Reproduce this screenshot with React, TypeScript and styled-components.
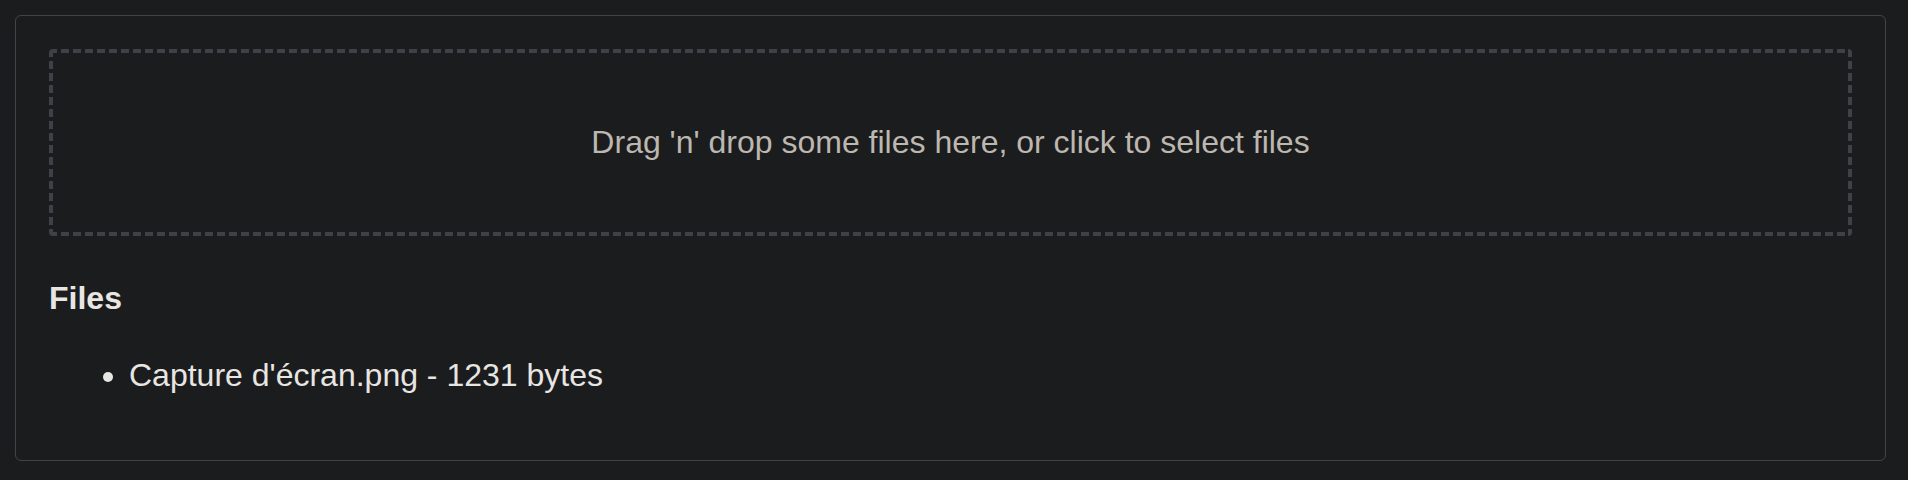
import React from "react";
import styled, { createGlobalStyle } from "styled-components";

const GlobalStyle = createGlobalStyle`
  html, body {
    margin: 0;
    padding: 0;
    background: #1b1c1e;
  }
  body {
    font-family: "Liberation Sans", Arial, sans-serif;
    color: #e8e6e3;
  }
`;

const Page = styled.div`
  padding: 15px 0 19px 15px;
`;

const Card = styled.section`
  box-sizing: border-box;
  width: 1871px;
  border: 1px solid #424447;
  border-radius: 6px;
  padding: 33px;
  display: flex;
  flex-direction: column;
`;

const dash = "#3e4246";

const DropZone = styled.div`
  box-sizing: border-box;
  height: 187px;
  display: flex;
  align-items: center;
  justify-content: center;
  border-radius: 4px;
  cursor: pointer;
  background:
    repeating-linear-gradient(90deg, ${dash} 0 8px, transparent 8px 12px) top left / 100% 4px no-repeat,
    repeating-linear-gradient(90deg, ${dash} 0 8px, transparent 8px 12px) bottom left / 100% 4px no-repeat,
    repeating-linear-gradient(180deg, ${dash} 0 8px, transparent 8px 12px) top left / 4px 100% no-repeat,
    repeating-linear-gradient(180deg, ${dash} 0 8px, transparent 8px 12px) top right / 4px 100% no-repeat;
`;

const DropText = styled.p`
  margin: 0;
  font-size: 32px;
  line-height: 37px;
  color: #bcb7af;
`;

const Heading = styled.h4`
  margin: 44px 0 40px;
  font-size: 32px;
  line-height: 37px;
  font-weight: 700;
  color: #e8e6e3;
`;

const FileList = styled.ul`
  margin: 0 0 33px;
  padding-left: 80px;
  font-size: 32px;
  line-height: 37px;
  color: #e8e6e3;
`;

const FileItem = styled.li``;

const files = [{ name: "Capture d'écran.png", size: 1231 }];

export default function App() {
  return (
    <>
      <GlobalStyle />
      <Page>
        <Card>
          <DropZone>
            <DropText>Drag 'n' drop some files here, or click to select files</DropText>
          </DropZone>
          <Heading>Files</Heading>
          <FileList>
            {files.map((f) => (
              <FileItem key={f.name}>
                {f.name} - {f.size} bytes
              </FileItem>
            ))}
          </FileList>
        </Card>
      </Page>
    </>
  );
}
